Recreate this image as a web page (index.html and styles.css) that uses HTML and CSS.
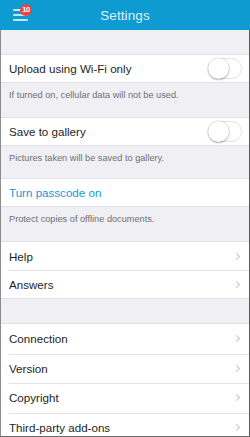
FILE: index.html
```html
<!DOCTYPE html>
<html>
<head>
<meta charset="utf-8">
<link rel="stylesheet" href="styles.css">
</head>
<body>
<div class="app">
  <header class="topbar">
    <div class="menu">
      <svg class="burger" width="16" height="14" viewBox="0 0 16 14">
        <rect x="0" y="2" width="15" height="2" rx="1"/>
        <rect x="0" y="7" width="15" height="2" rx="1"/>
        <rect x="0" y="12" width="15" height="2" rx="1"/>
      </svg>
      <span class="badge">10</span>
    </div>
    <div class="title">Settings</div>
  </header>
  <main class="content">
    <div class="spacer"></div>
    <div class="group single">
      <div class="row"><span class="label">Upload using Wi-Fi only</span><span class="toggle"><span class="knob"></span></span></div>
    </div>
    <div class="note n1">If turned on, cellular data will not be used.</div>
    <div class="group single">
      <div class="row"><span class="label">Save to gallery</span><span class="toggle"><span class="knob"></span></span></div>
    </div>
    <div class="note n2">Pictures taken will be saved to gallery.</div>
    <div class="group single">
      <div class="row"><span class="label link">Turn passcode on</span></div>
    </div>
    <div class="note n3">Protect copies of offline documents.</div>
    <div class="group help">
      <div class="row"><span class="label">Help</span><span class="chev"></span></div>
      <div class="row"><span class="label">Answers</span><span class="chev"></span></div>
    </div>
    <div class="spacer"></div>
    <div class="group about">
      <div class="row"><span class="label">Connection</span><span class="chev"></span></div>
      <div class="row"><span class="label">Version</span><span class="chev"></span></div>
      <div class="row"><span class="label">Copyright</span><span class="chev"></span></div>
      <div class="row"><span class="label">Third-party add-ons</span><span class="chev"></span></div>
    </div>
  </main>
</div>
</body>
</html>
```
FILE: styles.css
```css
* { box-sizing: border-box; }
html, body { margin: 0; padding: 0; }
body {
  width: 250px;
  height: 437px;
  overflow: hidden;
  font-family: "Liberation Sans", Arial, sans-serif;
  background: #efeff4;
}
.app { width: 250px; height: 437px; display: flex; flex-direction: column; }
.topbar {
  height: 30px;
  background: #0d9bd2;
  display: flex;
  align-items: center;
  justify-content: center;
  position: relative;
  flex: none;
}
.menu { position: absolute; left: 13px; top: 7px; width: 16px; height: 16px; }
.burger { fill: #c4e7f7; display: block; }
.badge {
  position: absolute;
  left: 7px;
  top: -3px;
  width: 12px;
  height: 12px;
  border-radius: 50%;
  background: #e9443c;
  color: #fff;
  font-size: 7.5px;
  font-weight: bold;
  line-height: 12px;
  text-align: center;
  letter-spacing: -0.3px;
}
.title {
  color: #dff1fa;
  font-size: 13.5px;
  letter-spacing: 0.1px;
  padding-top: 1px;
}
.content {
  flex: 1;
  min-height: 0;
  border-left: 1px solid #8c8c8c;
  border-right: 1px solid #5a5a5a;
  border-bottom: 1px solid #6a6a6a;
  overflow: hidden;
}
.spacer { height: 24px; }
.group {
  background: #fff;
  border-top: 1px solid #e2e2e6;
  border-bottom: 1px solid #e2e2e6;
}
.row {
  height: 27px;
  display: flex;
  align-items: center;
  justify-content: space-between;
  padding: 0 7px 0 8px;
  position: relative;
}
.help .row { height: 28px; }
.about .row { height: 29.5px; }
.row + .row::before {
  content: "";
  position: absolute;
  left: 8px;
  right: 0;
  top: 0;
  border-top: 1px solid #e4e4e8;
}
.label { font-size: 11.6px; color: #1e1e1e; }
.link { color: #1a98d5; }
.note {
  font-size: 9.2px;
  color: #6f6f74;
  padding: 7px 8px 0;
}
.n1 { height: 34px; }
.n2 { height: 32px; }
.n3 { height: 34px; }
.toggle {
  width: 34px;
  height: 21px;
  border-radius: 11px;
  border: 1px solid #e3e3e6;
  background: #fff;
  position: relative;
}
.knob {
  position: absolute;
  left: -1px;
  top: -1px;
  width: 21px;
  height: 21px;
  border-radius: 50%;
  background: #fff;
  box-shadow: 0 1px 2px rgba(0,0,0,0.3), 0 0 0 0.5px rgba(0,0,0,0.12);
}
.chev {
  width: 5px;
  height: 5px;
  border-top: 1px solid #c4c4c8;
  border-right: 1px solid #c4c4c8;
  transform: rotate(45deg);
  margin-right: 3px;
}
```
